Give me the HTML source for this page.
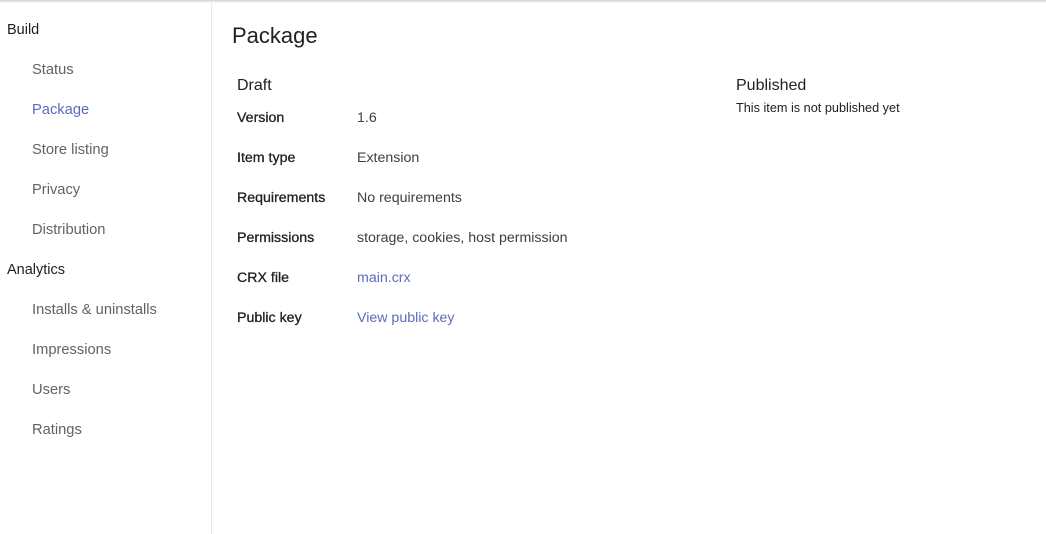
<!DOCTYPE html>
<html><head><style>
body{margin:0;width:1046px;height:534px;overflow:hidden;background:#fff;font-family:"Liberation Sans",sans-serif;position:relative}
.top{position:absolute;left:0;top:0;width:1046px;height:3px;background:linear-gradient(#cfcfcf,#fff)}
.side{position:absolute;left:211px;top:3px;width:1px;height:531px;background:#e8e8e8}
.t{position:absolute;white-space:nowrap;line-height:20px}
.h{left:7px;font-size:14.5px;color:#202124}
.i{left:32px;font-size:14.7px;color:#5f6368}
.l{left:237px;font-size:14.2px;color:#202124;-webkit-text-stroke:0.3px #202124}
.v{left:357px;font-size:14.2px;color:#3c4043}
.a{color:#5c6bc0}
</style></head><body>
<div class="top"></div><div class="side"></div>
<div class="t h" style="top:20px">Build</div>
<div class="t i" style="top:60px">Status</div>
<div class="t i" style="top:100px;color:#5c6bc0">Package</div>
<div class="t i" style="top:140px">Store listing</div>
<div class="t i" style="top:180px">Privacy</div>
<div class="t i" style="top:220px">Distribution</div>
<div class="t h" style="top:260px">Analytics</div>
<div class="t i" style="top:300px">Installs &amp; uninstalls</div>
<div class="t i" style="top:340px">Impressions</div>
<div class="t i" style="top:380px">Users</div>
<div class="t i" style="top:420px">Ratings</div>
<div class="t" style="left:232px;top:22px;font-size:22px;line-height:28px;color:#202124">Package</div>
<div class="t" style="left:237px;top:76px;font-size:16px;color:#202124">Draft</div>
<div class="t" style="left:736px;top:76px;font-size:16px;color:#202124">Published</div>
<div class="t" style="left:736px;top:98px;font-size:12.7px;color:#202124">This item is not published yet</div>
<div class="t l" style="top:108px">Version</div><div class="t v" style="top:108px">1.6</div>
<div class="t l" style="top:148px">Item type</div><div class="t v" style="top:148px">Extension</div>
<div class="t l" style="top:188px">Requirements</div><div class="t v" style="top:188px">No requirements</div>
<div class="t l" style="top:228px">Permissions</div><div class="t v" style="top:228px">storage, cookies, host permission</div>
<div class="t l" style="top:268px">CRX file</div><div class="t v a" style="top:268px">main.crx</div>
<div class="t l" style="top:308px">Public key</div><div class="t v a" style="top:308px">View public key</div>
</body></html>
